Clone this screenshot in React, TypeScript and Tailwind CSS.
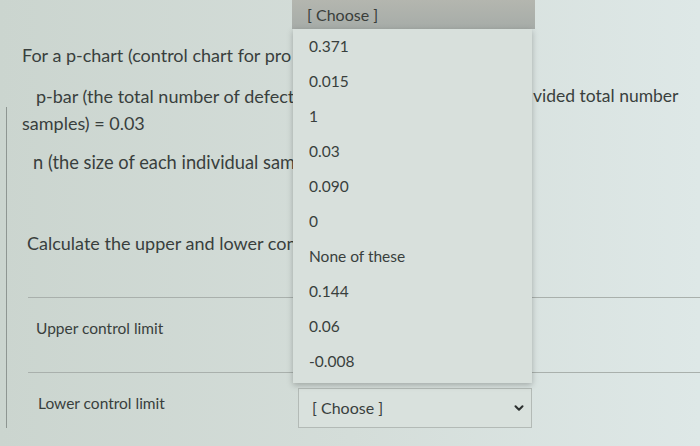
import React from 'react';
import { ChevronDown } from 'lucide-react';

const options = ['0.371', '0.015', '1', '0.03', '0.090', '0', 'None of these', '0.144', '0.06', '-0.008'];

const App: React.FC = () => {
  return (
    <div
      className="relative w-[700px] h-[446px] overflow-hidden bg-gradient-to-r from-[#cbd5cf] via-[#d4ddd9] to-[#dee8e7] text-[#393f3d]"
      style={{ fontFamily: 'Lato, "Open Sans", sans-serif' }}
    >
      <div className="pt-[44px]">
        <p className="ml-[22px] text-[18px] leading-[22px] whitespace-nowrap">For a p-chart (control chart for pro</p>
        <p className="mt-[19px] ml-[36px] flex text-[18px] leading-[22px] whitespace-nowrap">
          <span className="w-[256px]">p-bar (the total number of defect</span>
          <span className="ml-[241px] text-[17.5px]">vided total number</span>
        </p>

        <div className="ml-[6px] border-l border-[#8e9692] pt-[5px]">
          <p className="ml-[15px] text-[18px] leading-[22px]">samples) = 0.03</p>
          <p className="mt-[17px] ml-[26px] text-[18.3px] leading-[22px] whitespace-nowrap">
            n (the size of each individual samp
          </p>
          <p className="mt-[59px] ml-[20px] text-[18px] leading-[22px] whitespace-nowrap">
            Calculate the upper and lower cont
          </p>

          <div className="mt-[43px] ml-[21px] border-t border-[#a9b0ac]">
            <div className="h-[74px] pt-[20px] pl-[8px] text-[15.5px] leading-[20px]">Upper control limit</div>
            <div className="border-t border-[#a9b0ac] pt-[15px] flex items-start">
              <div className="w-[270px] pl-[10px] pt-[5px] text-[15.5px] leading-[20px]">Lower control limit</div>
              <div className="w-[234px] h-[40px] border border-[#b3bab6] bg-[#d9e1dd] flex items-center justify-between pl-[13px] pr-[5px] text-[16px]">
                <span>[ Choose ]</span>
                <ChevronDown size={14} strokeWidth={3.5} className="text-[#2c302f]" />
              </div>
            </div>
          </div>
        </div>
      </div>

      <div className="absolute top-0 left-[292px] w-[243px] h-[29px] bg-gradient-to-b from-[#b4b6af] to-[#a6aca8] pl-[15px] flex items-center text-[16px] text-[#3a3e3b]">
        [ Choose ]
      </div>
      <div className="absolute top-[29px] left-[293px] w-[239px] h-[354px] bg-[#d8e0dc] shadow-[0_2px_6px_rgba(0,0,0,0.25)] text-[15.5px]">
        {options.map((o) => (
          <div key={o} className="h-[35px] pl-[16px] flex items-center">
            {o}
          </div>
        ))}
      </div>
    </div>
  );
};

export default App;
